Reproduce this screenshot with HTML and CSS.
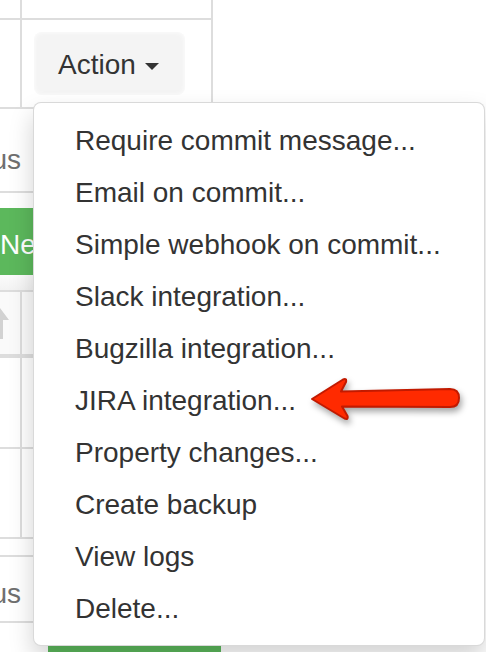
FILE: index.html
```html
<!DOCTYPE html>
<html>
<head>
<meta charset="utf-8">
<link rel="stylesheet" href="styles.css">
</head>
<body>
<div class="page">
  <div class="tbl">
    <div class="row r-top"><div class="c-a"></div><div class="c-b"></div></div>
    <div class="row r-act">
      <div class="c-a"></div>
      <div class="c-b">
        <button class="btn-action">Action<span class="caret"></span></button>
      </div>
    </div>
    <div class="row r-status"><div class="lbl"><span>Status</span></div></div>
    <div class="gap g1"></div>
    <div class="btn-new"><span>New</span></div>
    <div class="thead-band"></div>
    <div class="row r-head">
      <div class="c-a">
        <svg class="sort" width="20" height="32" viewBox="0 0 20 32"><path d="M0 0 L9 12 L3 12 L3 31 L-3 31 L-3 12 L-9 12 Z" fill="#d2d2d2"/></svg>
      </div>
      <div class="c-b"></div>
    </div>
    <div class="row r-body"><div class="c-a"></div><div class="c-b"></div></div>
    <div class="row r-body b2"><div class="c-a"></div><div class="c-b"></div></div>
    <div class="gap g2"></div>
    <div class="row r-status s2"><div class="lbl"><span>Status</span></div></div>
    <div class="gap g3"></div>
    <div class="btn-new2"></div>
  </div>

  <ul class="menu">
    <li>Require commit message...</li>
    <li>Email on commit...</li>
    <li>Simple webhook on commit...</li>
    <li>Slack integration...</li>
    <li>Bugzilla integration...</li>
    <li>JIRA integration...</li>
    <li>Property changes...</li>
    <li>Create backup</li>
    <li>View logs</li>
    <li>Delete...</li>
  </ul>

  <svg class="arrow" width="160" height="64" viewBox="0 0 160 64">
    <path d="M7 29 L38 9.5 Q42 8 41 12 L36 21.5 L145 19 Q154 19 154 28 Q154 37 145 37 L37 36.5 L42.5 46 Q43.5 50 39.5 48.5 Z" fill="#ff2a00" stroke="#c21a00" stroke-width="2" stroke-linejoin="round"/>
  </svg>
</div>
</body>
</html>
```

FILE: styles.css
```css
* { box-sizing: border-box; }
html, body { margin: 0; padding: 0; background: #fff; }
body {
  font-family: "Liberation Sans", Arial, Helvetica, sans-serif;
  color: #333;
}
.page {
  position: relative;
  width: 486px;
  height: 652px;
  overflow: hidden;
}
.tbl {
  width: 213px;
  display: flex;
  flex-direction: column;
}
.row {
  display: flex;
  border-bottom: 2px solid #dddddd;
}
.c-a {
  width: 22px;
  border-right: 2px solid #dddddd;
  flex: none;
  position: relative;
  overflow: hidden;
}
.c-b {
  width: 191px;
  border-right: 2px solid #dddddd;
  flex: none;
}
.r-top { height: 20px; }
.r-act { height: 89px; }
.r-act .c-b { padding: 12px 0 0 12px; }
.btn-action {
  display: flex;
  align-items: center;
  height: 63px;
  width: 151px;
  padding: 3px 0 0 24px;
  border: none;
  border-radius: 8px;
  background: #f4f4f4;
  box-shadow: inset 0 0 5px rgba(255,255,255,0.9);
  font-family: "Liberation Sans", Arial, sans-serif;
  font-size: 28px;
  color: #333;
  line-height: 40px;
}
.caret {
  display: inline-block;
  width: 0;
  height: 0;
  margin-left: 9px;
  margin-top: 2px;
  border-left: 7px solid transparent;
  border-right: 7px solid transparent;
  border-top: 7px solid #333;
}
.r-status {
  height: 84px;
  padding-top: 17px;
}
.lbl {
  width: 21px;
  overflow: hidden;
  display: flex;
  justify-content: flex-end;
  font-size: 28px;
  line-height: 68px;
  color: #6f6f6f;
  white-space: nowrap;
}
.gap { flex: none; }
.g1 { height: 15px; }
.btn-new {
  height: 67px;
  width: 120px;
  background: #5cb85c;
  color: #fff;
  font-size: 28px;
  line-height: 67px;
  padding-top: 3px;
  white-space: nowrap;
  overflow: hidden;
}
.thead-band {
  height: 17px;
  background: linear-gradient(#fbfbfb, #f3f3f3);
  border-bottom: 2px solid #dddddd;
}
.r-head {
  height: 66px;
  border-bottom: 4px solid #dddddd;
  background: #fafafa;
}
.sort {
  position: absolute;
  left: 0;
  top: 16px;
}
.r-body { height: 91px; }
.b2 { height: 90px; }
.g2 { height: 18px; border-bottom: 2px solid #dddddd; }
.s2 {
  height: 66px;
  padding-top: 9px;
}
.s2 .lbl { line-height: 56px; }
.g3 { height: 18px; }
.btn-new2 {
  margin-left: 48px;
  width: 173px;
  height: 30px;
  background: #5cb85c;
}

.menu {
  position: absolute;
  left: 33px;
  top: 102px;
  width: 452px;
  margin: 0;
  padding: 12px 0 10px;
  list-style: none;
  background: #fff;
  border: 1px solid rgba(0,0,0,0.15);
  border-radius: 8px;
  box-shadow: 0 12px 24px rgba(0,0,0,0.175);
}
.menu li {
  padding: 6px 20px 6px 41px;
  font-size: 28px;
  line-height: 40px;
  color: #333;
  white-space: nowrap;
}
.arrow {
  position: absolute;
  left: 305px;
  top: 370px;
  filter: drop-shadow(2px 4px 3px rgba(0,0,0,0.35));
}
```
